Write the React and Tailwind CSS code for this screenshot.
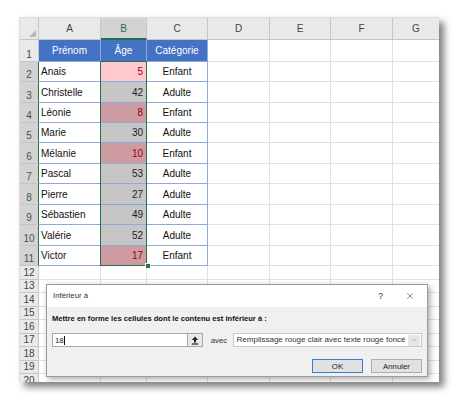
import React from 'react';
import { X, ChevronDown } from 'lucide-react';

const COLUMNS = [
    { key: 'A', w: 'w-[62px]' },
    { key: 'B', w: 'w-[46px]' },
    { key: 'C', w: 'w-[61px]' },
    { key: 'D', w: 'w-[62px]' },
    { key: 'E', w: 'w-[61px]' },
    { key: 'F', w: 'w-[62px]' },
    { key: 'G', w: 'w-[47px]' }
];

const PEOPLE = [
    { name: 'Anais', age: 5, cat: 'Enfant', h: 'h-[20px]' },
    { name: 'Christelle', age: 42, cat: 'Adulte', h: 'h-[21px]' },
    { name: 'Léonie', age: 8, cat: 'Enfant', h: 'h-[20px]' },
    { name: 'Marie', age: 30, cat: 'Adulte', h: 'h-[20px]' },
    { name: 'Mélanie', age: 10, cat: 'Enfant', h: 'h-[21px]' },
    { name: 'Pascal', age: 53, cat: 'Adulte', h: 'h-[20px]' },
    { name: 'Pierre', age: 27, cat: 'Adulte', h: 'h-[21px]' },
    { name: 'Sébastien', age: 49, cat: 'Adulte', h: 'h-[20px]' },
    { name: 'Valérie', age: 52, cat: 'Adulte', h: 'h-[21px]' },
    { name: 'Victor', age: 17, cat: 'Enfant', h: 'h-[20px]' }
];

const EMPTY_ROWS = [12, 13, 14, 15, 16, 17, 18, 19, 20];

const GRID = 'border-r border-b border-[#e1e1e1]';
const TABLE = 'border-r border-b border-[#8eaadb]';

function RowHeader({ n, selected, h }) {
    return (
        <div
            className={`${h} w-[19px] shrink-0 flex items-end justify-center pb-[1px] border-b border-r text-[10px] leading-none ${selected
                    ? 'bg-[#d3d3d3] text-[#3c5a48] border-b-[#c4c4c4] border-r-[#217346]'
                    : 'bg-[#e9e9e9] text-[#444] border-[#c6c6c6]'
                }`}
        >
            {n}
        </div>
    );
}

function Sheet() {
    return (
        <div className="relative w-[420px] h-[365px] overflow-hidden bg-white border-t border-l border-[#dcdcdc] shadow-[5px_5px_7px_rgba(0,0,0,0.5)]">
            {/* en-têtes de colonnes */}
            <div className="flex h-[22px]">
                <div className="w-[19px] shrink-0 bg-[#e9e9e9] border-r border-b border-[#c6c6c6] flex items-end justify-end p-[2px]">
                    <div className="w-0 h-0 border-l-[7px] border-l-transparent border-b-[7px] border-b-[#b8b8b8]" />
                </div>
                {COLUMNS.map(col => (
                    <div
                        key={col.key}
                        className={`${col.w} shrink-0 flex items-center justify-center text-[10px] border-r ${col.key === 'B'
                                ? 'bg-[#d3d3d3] text-[#217346] border-r-[#c6c6c6] border-b-2 border-b-[#217346]'
                                : 'bg-[#e9e9e9] text-[#444] border-b border-[#c6c6c6]'
                            }`}
                    >
                        {col.key}
                    </div>
                ))}
            </div>

            {/* ligne 1 : titres */}
            <div className="flex h-[22px] text-[10px]">
                <RowHeader n={1} h="h-[22px]" />
                <div className={`w-[62px] shrink-0 bg-[#4472c4] text-white flex items-center justify-center ${TABLE}`}>Prénom</div>
                <div className={`w-[46px] shrink-0 bg-[#4472c4] text-white flex items-center justify-center ${TABLE}`}>Âge</div>
                <div className={`w-[61px] shrink-0 bg-[#4472c4] text-white flex items-center justify-center ${TABLE}`}>Catégorie</div>
                <div className={`w-[62px] shrink-0 ${GRID}`} />
                <div className={`w-[61px] shrink-0 ${GRID}`} />
                <div className={`w-[62px] shrink-0 ${GRID}`} />
                <div className={`w-[47px] shrink-0 ${GRID}`} />
            </div>

            {/* lignes 2 à 11 */}
            {PEOPLE.map((p, i) => {
                const isChild = p.age < 18;
                const active = i === 0;
                let ageCls = 'bg-[#c6c6c6] text-[#222]';
                if (active) ageCls = 'bg-[#ffc7ce] text-[#9c0006]';
                else if (isChild) ageCls = 'bg-[#cd9ba1] text-[#9c0006]';
                return (
                    <div key={p.name} className={`flex ${p.h} text-[10px] text-[#111]`}>
                        <RowHeader n={i + 2} selected h={p.h} />
                        <div className={`w-[62px] shrink-0 flex items-center pl-[2px] ${TABLE}`}>{p.name}</div>
                        <div className={`w-[46px] shrink-0 flex items-center justify-end pr-[3px] ${ageCls} ${TABLE}`}>{p.age}</div>
                        <div className={`w-[61px] shrink-0 flex items-center justify-center ${TABLE}`}>{p.cat}</div>
                        <div className={`w-[62px] shrink-0 ${GRID}`} />
                        <div className={`w-[61px] shrink-0 ${GRID}`} />
                        <div className={`w-[62px] shrink-0 ${GRID}`} />
                        <div className={`w-[47px] shrink-0 ${GRID}`} />
                    </div>
                );
            })}

            {/* lignes vides */}
            {EMPTY_ROWS.map(n => (
                <div key={n} className="flex h-[13.5px]">
                    <RowHeader n={n} h="h-[13.5px]" />
                    {COLUMNS.map(col => (
                        <div key={col.key} className={`${col.w} shrink-0 ${GRID}`} />
                    ))}
                </div>
            ))}

            {/* sélection B2:B11 */}
            <div className="absolute left-[80px] top-[43px] w-[47px] h-[205px] border-[1.5px] border-[#217346] pointer-events-none" />
            <div className="absolute left-[125px] top-[245px] w-[4px] h-[4px] bg-[#217346] border border-white box-content" />

            <Dialog />
        </div>
    );
}

function CollapseIcon() {
    return (
        <svg width="8" height="9" viewBox="0 0 8 9">
            <path d="M4 0.5 L7.2 4 L5 4 L5 6.5 L3 6.5 L3 4 L0.8 4 Z" fill="#222" />
            <rect x="0.8" y="7.4" width="6.4" height="1.2" fill="#222" />
        </svg>
    );
}

function Dialog() {
    return (
        <div
            className="absolute left-[26px] top-[266px] w-[382px] h-[93px] flex flex-col border border-[#9a9a9a] shadow-[2px_2px_6px_rgba(0,0,0,0.35)] text-[7.8px] text-[#222]"
            style={{ fontFamily: '"Liberation Sans", Arial, sans-serif' }}
        >
            {/* barre de titre */}
            <div className="h-[22px] shrink-0 bg-white flex items-center pl-[6px] pr-[12px]">
                <span className="text-[#333]">Inférieur à</span>
                <span className="ml-auto text-[8.5px] text-[#333]">?</span>
                <X className="ml-[22px]" size={10} strokeWidth={1.3} color="#333" />
            </div>

            {/* corps */}
            <div className="flex-1 bg-[#f0f0f0] px-[5px] pt-[6px]">
                <div className="font-bold text-[7.6px] text-[#111]">Mettre en forme les cellules dont le contenu est inférieur à :</div>

                <div className="flex items-center mt-[9px] h-[14px]">
                    <div className="w-[152px] h-full flex items-center bg-white border border-[#a8a8a8]">
                        <span className="pl-[2px]">18</span>
                        <span className="w-px h-[9px] bg-[#111]" />
                        <div className="ml-auto h-full w-[15px] flex items-center justify-center bg-[#e8e8e8] border-l border-[#a8a8a8]">
                            <CollapseIcon />
                        </div>
                    </div>
                    <span className="ml-[8px] w-[22px] text-[#333]">avec</span>
                    <div className="w-[191px] h-full flex items-center bg-white border border-[#c8c8c8] pl-[3px]">
                        <span className="text-[8px] text-[#333] whitespace-nowrap">Remplissage rouge clair avec texte rouge foncé</span>
                        <div className="ml-auto mr-[1px] h-[11px] w-[12px] flex items-center justify-center bg-[#e6e6e6]">
                            <ChevronDown size={8} strokeWidth={1.5} color="#777" />
                        </div>
                    </div>
                </div>

                <div className="flex justify-end gap-[8px] mt-[12px]">
                    <button type="button" className="w-[51px] h-[14px] bg-[#e1e1e1] border-[1.5px] border-[#2f7fd6] text-[#222] flex items-center justify-center">
                        OK
                    </button>
                    <button type="button" className="w-[51px] h-[14px] bg-[#e1e1e1] border border-[#adadad] text-[#222] flex items-center justify-center">
                        Annuler
                    </button>
                </div>
            </div>
        </div>
    );
}

export default function App() {
    return (
        <div
            className="w-[474px] h-[420px] bg-white pl-[19px] pt-[17px]"
            style={{ fontFamily: '"Liberation Sans", Arial, sans-serif' }}
        >
            <Sheet />
        </div>
    );
}
